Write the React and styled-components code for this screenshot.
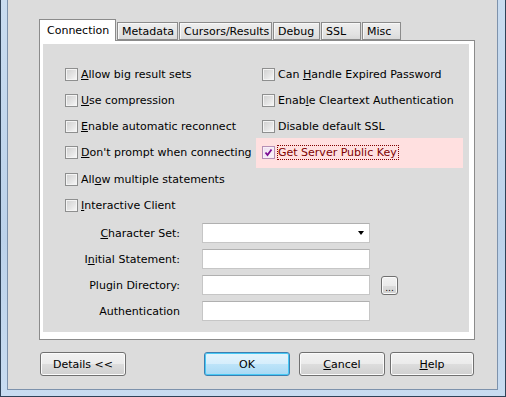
import styled, { createGlobalStyle } from "styled-components";

const Global = createGlobalStyle`
  body {
    margin: 0;
    font-family: "DejaVu Sans", sans-serif;
    font-size: 11px;
    color: #000;
  }
`;

const Frame = styled.div`
  width: 506px;
  height: 397px;
  box-sizing: border-box;
  display: flex;
  background: linear-gradient(180deg, #c9dcf0 0%, #bcd2ea 60%, #c8dcf1 100%);
  border: 1px solid #2f4258;
  border-top: none;
  padding: 0 7px 6px 6px;
`;

const Client = styled.div`
  flex: 1;
  display: flex;
  flex-direction: column;
  background: #dcdcdc;
  border: 1px solid #7d92ac;
  border-top: none;
  padding: 19px 22px 0 31px;
`;

const TabStrip = styled.div`
  display: flex;
  align-items: flex-end;
  height: 21px;
  position: relative;
  z-index: 1;
`;

const Tab = styled.div`
  box-sizing: border-box;
  width: ${(p) => p.$w}px;
  height: ${(p) => (p.$active ? 22 : 18)}px;
  margin-bottom: ${(p) => (p.$active ? -1 : 0)}px;
  padding-left: ${(p) => (p.$active ? 7 : 4)}px;
  display: flex;
  align-items: center;
  border: 1px solid #8b8b8b;
  border-bottom: ${(p) => (p.$active ? "none" : "1px solid #8b8b8b")};
  margin-right: 1px;
  background: ${(p) =>
    p.$active ? "#fff" : "linear-gradient(180deg, #eeeeee 0%, #e2e2e2 70%, #d9d9d9 100%)"};
  box-shadow: ${(p) => (p.$active ? "none" : "inset 1px 1px 0 #f8f8f8")};
  white-space: nowrap;
  overflow: hidden;
`;

const Panel = styled.div`
  box-sizing: border-box;
  width: 436px;
  height: 300px;
  display: flex;
  border: 1px solid #8b8b8b;
  background: #fff;
  padding: 3px 5px 7px 3px;
`;

const Inner = styled.div`
  flex: 1;
  background: #dcdcdc;
  padding: 17px 0 0 22px;
`;

const CheckGrid = styled.div`
  display: grid;
  grid-template-columns: 191px 207px;
  grid-template-rows: repeat(6, 26.25px);
  grid-auto-flow: column;
`;

const CheckCell = styled.label`
  display: flex;
  align-items: center;
  gap: 3px;
  padding-left: ${(p) => (p.$right ? 6 : 0)}px;
  background: ${(p) => (p.$focus ? "#ffe0e0" : "transparent")};
  margin: ${(p) => (p.$focus ? "-2px 0" : "0")};
  white-space: nowrap;
`;

const Box = styled.span`
  box-sizing: border-box;
  width: 13px;
  height: 13px;
  flex: none;
  display: flex;
  align-items: center;
  justify-content: center;
  border: 1px solid ${(p) => (p.$checked ? "#b58fb5" : "#8e8f8f")};
  background: ${(p) =>
    p.$checked
      ? "linear-gradient(135deg, #eedff0, #fbf6fb)"
      : "linear-gradient(135deg, #cfcfcf 0%, #e6e6e6 60%, #fafafa 100%)"};
  box-shadow: inset 0 0 0 1px ${(p) => (p.$checked ? "#f8eef8" : "#f4f4f4")};
`;

const Caption = styled.span`
  color: ${(p) => (p.$focus ? "#800000" : "#000")};
  outline: ${(p) => (p.$focus ? "1px dotted #800000" : "none")};
  padding: 0 1px 0 0;
  line-height: 13px;
`;

const Form = styled.div`
  display: grid;
  grid-template-columns: 126px 168px 17px;
  grid-auto-rows: 20px;
  column-gap: 11px;
  row-gap: 6px;
  margin-top: 4.5px;
`;

const Label = styled.span`
  align-self: center;
  text-align: right;
  padding-right: 11px;
  white-space: nowrap;
`;

const Field = styled.div`
  box-sizing: border-box;
  display: flex;
  align-items: center;
  justify-content: flex-end;
  padding-right: 5px;
  background: #fff;
  border: 1px solid #c6c6c6;
  border-top-color: #b0b0b0;
`;

const Arrow = styled.span`
  width: 0;
  height: 0;
  border-left: 3.5px solid transparent;
  border-right: 3.5px solid transparent;
  border-top: 4px solid #000;
`;

const Button = styled.button`
  box-sizing: border-box;
  width: ${(p) => p.$w}px;
  height: 24px;
  margin-left: ${(p) => p.$ml || 0};
  padding: 0;
  font: inherit;
  color: #000;
  border-radius: 3px;
  border: 1px solid ${(p) => (p.$default ? "#3c7fb1" : "#707070")};
  background: ${(p) =>
    p.$default
      ? "linear-gradient(180deg, #e5f4fc 0%, #d5eefc 50%, #bde4f9 51%, #a9d9f4 100%)"
      : "linear-gradient(180deg, #f2f2f2 0%, #ebebeb 50%, #dddddd 51%, #cfcfcf 100%)"};
  box-shadow: inset 0 0 0 1px ${(p) => (p.$default ? "#48c9f5" : "#fbfbfb")};
`;

const SmallButton = styled(Button)`
  height: 19px;
  align-self: center;
  font-size: 9px;
  line-height: 19px;
  padding-top: 2px;
`;

const ButtonRow = styled.div`
  display: flex;
  margin-top: 12px;
  padding: 0 1px;
`;

const Check = () => (
  <svg width="9" height="9" viewBox="0 0 9 9">
    <path d="M1.5 4.5 L3.5 7 L7.5 1.5" fill="none" stroke="#7d0c93" strokeWidth="1.8" />
  </svg>
);

const CheckItem = ({ children, checked, focus, right }) => (
  <CheckCell $focus={focus} $right={right}>
    <Box $checked={checked}>{checked && <Check />}</Box>
    <Caption $focus={focus}>{children}</Caption>
  </CheckCell>
);

const tabs = [
  ["Connection", 77],
  ["Metadata", 61],
  ["Cursors/Results", 93],
  ["Debug", 47],
  ["SSL", 40],
  ["Misc", 39],
];

export default function App() {
  return (
    <>
      <Global />
      <Frame>
        <Client>
          <TabStrip>
            {tabs.map(([name, w], i) => (
              <Tab key={name} $w={w} $active={i === 0}>
                {name}
              </Tab>
            ))}
          </TabStrip>
          <Panel>
            <Inner>
              <CheckGrid>
                <CheckItem><u>A</u>llow big result sets</CheckItem>
                <CheckItem><u>U</u>se compression</CheckItem>
                <CheckItem><u>E</u>nable automatic reconnect</CheckItem>
                <CheckItem><u>D</u>on't prompt when connecting</CheckItem>
                <CheckItem>All<u>o</u>w multiple statements</CheckItem>
                <CheckItem><u>I</u>nteractive Client</CheckItem>
                <CheckItem right>Can <u>H</u>andle Expired Password</CheckItem>
                <CheckItem right>Enab<u>l</u>e Cleartext Authentication</CheckItem>
                <CheckItem right>Disable default SSL</CheckItem>
                <CheckItem right checked focus>Get Server Public Key</CheckItem>
              </CheckGrid>
              <Form>
                <Label><u>C</u>haracter Set:</Label>
                <Field><Arrow /></Field>
                <span />
                <Label>I<u>n</u>itial Statement:</Label>
                <Field />
                <span />
                <Label>Plugin Directory:</Label>
                <Field />
                <SmallButton $w={17}>...</SmallButton>
                <Label>Authentication</Label>
                <Field />
                <span />
              </Form>
            </Inner>
          </Panel>
          <ButtonRow>
            <Button $w={86}>Details &lt;&lt;</Button>
            <Button $w={86} $default $ml="auto">OK</Button>
            <Button $w={86} $ml="9px"><u>C</u>ancel</Button>
            <Button $w={84} $ml="5px"><u>H</u>elp</Button>
          </ButtonRow>
        </Client>
      </Frame>
    </>
  );
}
